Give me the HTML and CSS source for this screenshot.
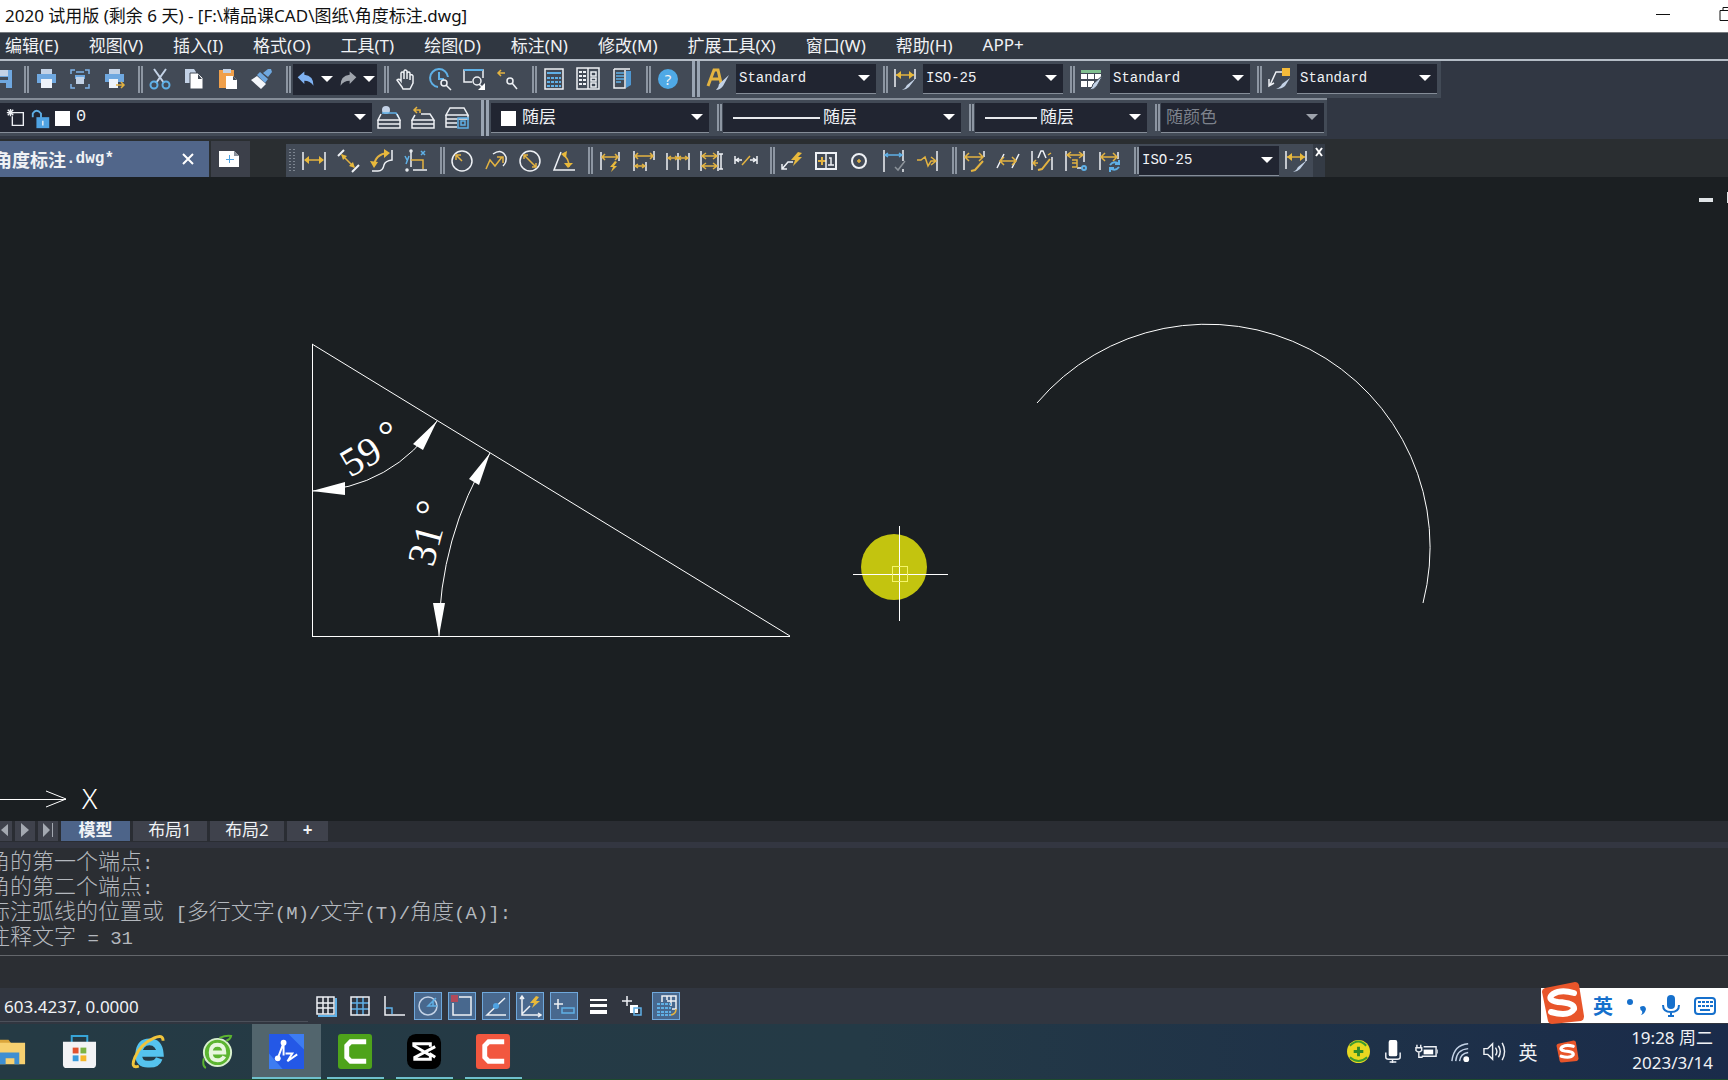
FILE: index.html
```html
<!DOCTYPE html>
<html lang="zh-CN">
<head>
    <meta charset="UTF-8">
    <meta name="viewport" content="width=device-width, initial-scale=1.0">
    <title>角度标注.dwg</title>
    <link rel="stylesheet" href="styles.css">
</head>
<body>
    <svg class="defs" width="0" height="0">
        <symbol id="dim-style" viewBox="0 0 24 24">
            <path class="w" d="M2 2v18M22 2v10"/>
            <path class="y" d="M3 8h18"/>
            <path class="yf" d="M3 8l5-4v8zM21 8l-5-4v8z"/>
            <path class="pf" d="M23 11l-7 9q-3 3-7 3 4-2 5-5z"/>
        </symbol>
        <symbol id="sogou" viewBox="0 0 44 44">
            <path fill="#e8552a" d="M4 7L34 1q3 0 4 3l5 31q0 4-3 5L11 43q-3 0-4-3L1 11q0-3 3-4z"/>
            <path fill="none" stroke="#fff" stroke-width="6" stroke-linecap="round" d="M33 12Q20 8 12 13Q5 19 17 21Q34 22 33 28Q28 36 10 31"/>
        </symbol>
    </svg>

    <header class="titlebar">
        <h1>2020 试用版 (剩余 6 天) - [F:\精品课CAD\图纸\角度标注.dwg]</h1>
        <div class="window-buttons">
            <button aria-label="最小化"><svg width="16" height="16"><path d="M1 8.500h14"/></svg></button>
            <button aria-label="还原"><svg width="16" height="16"><path d="M1 4.500h10v10h-10zM4 4.500v-3h11v10h-4"/></svg></button>
        </div>
    </header>

    <nav class="menubar">
        <button>编辑(E)</button>
        <button>视图(V)</button>
        <button>插入(I)</button>
        <button>格式(O)</button>
        <button>工具(T)</button>
        <button>绘图(D)</button>
        <button>标注(N)</button>
        <button>修改(M)</button>
        <button>扩展工具(X)</button>
        <button>窗口(W)</button>
        <button>帮助(H)</button>
        <button>APP+</button>
    </nav>

    <div class="toolbars">
        <!-- standard + styles -->
        <div class="toolbar standard">
            <button class="tool" aria-label="保存"><svg viewBox="0 0 24 24"><path class="lf" d="M2 3h23v18H2z"/><path class="pf" d="M10 3h10v6H10z"/><path fill="#424a56" d="M10 10h10v3H10zM12 16h6v5h-6z"/></svg></button>
            <i class="sep"></i>
            <button class="tool" aria-label="打印"><svg viewBox="0 0 24 24"><path class="pf" d="M7 2h11v5H7z"/><path class="lf" d="M3 7h19v9H3z"/><path fill="#eef3fa" d="M7 12h11v9H7z"/></svg></button>
            <button class="tool" aria-label="打印预览"><svg viewBox="0 0 24 24"><path class="l" d="M3 7V3h4M17 3h4v4M21 17v4h-4M7 21H3v-4M8 5h8"/><path class="lf" d="M7 8h10v4H7z"/><path class="pf" d="M8 10h8v7H8z"/></svg></button>
            <button class="tool" aria-label="发布"><svg viewBox="0 0 24 24"><path class="pf" d="M7 2h11v5H7z"/><path class="lf" d="M3 7h19v8H3z"/><path fill="#eef3fa" d="M7 12h9v9H7z"/><path class="y" d="M14 18h8M19 15l3 3-3 3"/></svg></button>
            <i class="sep"></i>
            <button class="tool" aria-label="剪切"><svg viewBox="0 0 24 24"><path class="p2" d="M6 2l10 14M18 2L8 16"/><circle class="b2" cx="6" cy="18" r="3.500"/><circle class="b2" cx="18" cy="18" r="3.500"/></svg></button>
            <button class="tool" aria-label="复制"><svg viewBox="0 0 24 24"><path class="pf" d="M3 2h9l2 3v11H3z"/><path class="wf" stroke="#424a56" d="M8 6h8l5 5v11H8z"/><path fill="#424a56" d="M16 7v5h4z"/></svg></button>
            <button class="tool" aria-label="粘贴"><svg viewBox="0 0 24 24"><path fill="#f0a04b" d="M3 3h15v18H3z"/><path class="pf" d="M7 2h8v4H7z"/><path class="wf" d="M10 9h7l4 4v9H10z"/><path fill="#424a56" d="M17 9v4h4z"/></svg></button>
            <button class="tool" aria-label="特性匹配"><svg viewBox="0 0 24 24"><path class="lf" d="M21 2l1 3-4 5-5-4 5-4zM10 5l8 7-3 4-8-8z"/><path fill="#f4f7fb" d="M1 13l6-4 9 8-5 5z"/></svg></button>
            <i class="sep"></i>
            <div class="history">
                <button aria-label="放弃"><svg viewBox="0 0 24 24"><path fill="#7fb2f2" d="M2 10l8-7v4q11 1 11 13-4-6-11-6v4z"/></svg></button>
                <i class="arrow"></i>
                <button aria-label="重做"><svg viewBox="0 0 24 24"><path fill="#a0a5ad" d="M22 10l-8-7v4Q3 8 3 20q4-6 11-6v4z"/></svg></button>
                <i class="arrow"></i>
            </div>
            <i class="sep"></i>
            <button class="tool" aria-label="平移"><svg viewBox="0 0 24 24"><path class="w" d="M8 20L3 13q2-2 4 1V6q1-2 3 0v-2q1-2 3 0v2q2-2 3 0v2q2-1 3 1v7l-3 6H9zM10 6v6M13 5v7M16 7v6"/></svg></button>
            <button class="tool" aria-label="实时缩放"><svg viewBox="0 0 24 24"><path class="b2" d="M10 20A9 9 0 1 1 20 10M11 5v7h5"/><circle class="w" cx="16" cy="16" r="3"/><path class="w" d="M18 18l5 5"/></svg></button>
            <button class="tool" aria-label="窗口缩放"><svg viewBox="0 0 24 24"><path class="w" d="M10 15H2V3h19v8"/><path class="b2" d="M2 3h19"/><circle class="w" cx="15" cy="14" r="4"/><path class="w" d="M17 17l3 3"/><path class="wf" d="M23 16v7h-7z"/></svg></button>
            <button class="tool" aria-label="缩放上一个"><svg viewBox="0 0 24 24"><path class="y" d="M2 6h7M5 3L2 6l3 3"/><circle class="w" cx="14" cy="14" r="3"/><path class="w" d="M16 16l5 6"/></svg></button>
            <i class="sep"></i>
            <button class="tool" aria-label="计算器"><svg viewBox="0 0 24 24"><path class="w" d="M3 2h18v20H3z"/><path class="b2" d="M5 6h14"/><path class="bd" d="M5 11h14M5 15h14M5 19h14"/></svg></button>
            <button class="tool" aria-label="工具选项板"><svg viewBox="0 0 24 24"><path class="w" d="M1 1h22v21H1zM12 1v21M15 5h5v4h-5zM15 11h5v3h-5zM15 16h5v4h-5z"/><path class="wd" d="M3 5h8M3 9h8M3 13h8M3 17h8"/></svg></button>
            <button class="tool" aria-label="特性"><svg viewBox="0 0 24 24"><path fill="#4f97d0" d="M16 4h5v14l-5 3z"/><path class="w" d="M4 2h16M4 2v19h11V3"/><path class="b" d="M6 6h8M6 9h8M6 12h8M6 15h5"/></svg></button>
            <i class="sep"></i>
            <button class="tool help" aria-label="帮助">?</button>
            <i class="sep big"></i>

            <button class="tool" aria-label="文字样式"><svg viewBox="0 0 24 24"><path class="y3" d="M2 19L8 3h4l3 13M5 12h9"/><path class="pf" d="M23 8l-6 11q-3 4-7 4 3-3 3-6z"/></svg></button>
            <div class="combo style"><select aria-label="文字样式"><option>Standard</option></select></div>
            <i class="sep"></i>
            <button class="tool" aria-label="标注样式"><svg><use href="#dim-style"/></svg></button>
            <div class="combo style"><select aria-label="标注样式"><option>ISO-25</option></select></div>
            <i class="sep"></i>
            <button class="tool" aria-label="表格样式"><svg viewBox="0 0 24 24"><path fill="#7fbf8f" d="M1 3h20v3H1z"/><path class="wf" d="M1 7h6v5H1zM8 7h6v5H8zM15 7h6v5h-6zM1 14h6v6H1zM8 14h6v6H8z"/><path class="pf" stroke="#424a56" d="M23 8l-6 11q-3 4-8 4 4-3 4-6z"/></svg></button>
            <div class="combo style"><select aria-label="表格样式"><option>Standard</option></select></div>
            <i class="sep"></i>
            <button class="tool" aria-label="多重引线样式"><svg viewBox="0 0 24 24"><path class="w" d="M15 5H9L3 18M2 12v7l5-3"/><path fill="#f5bb3a" d="M15 1h8v8h-8z"/><path class="pf" d="M23 11l-5 8q-3 3-9 3 5-2 6-5z"/></svg></button>
            <div class="combo style"><select aria-label="多重引线样式"><option>Standard</option></select></div>
        </div>

        <!-- layers + properties -->
        <div class="toolbar layers">
            <div class="combo layer">
                <span class="layer-icons">
                    <svg viewBox="0 0 24 24"><path class="w" d="M8 5h12v14H8V9"/><path class="w" d="M2 5h8M6 1v8M3 2l6 6M9 2L3 8"/></svg>
                    <svg viewBox="0 0 24 24"><path class="b2" d="M3 10V6q4-6 9 0v5"/><path fill="#4fa3e3" d="M7 10h14v12H7z"/><path class="w" d="M14 14v5"/></svg>
                    <i class="swatch"></i>
                </span>
                <select aria-label="图层"><option>0</option></select>
            </div>
            <button class="tool" aria-label="图层置为当前"><svg viewBox="0 0 24 24"><circle class="pf" cx="9" cy="4" r="4"/><path class="b" d="M5 7h14l3 5"/><path class="w" d="M4 8l-3 6h22l-3-6M1 14v4h22v-4M1 18v4h22v-4"/></svg></button>
            <button class="tool" aria-label="上一个图层"><svg viewBox="0 0 24 24"><path class="y" d="M3 4h6v3M6 1L3 4l3 3"/><path class="w" d="M10 8h9l4 6H1l3-5M1 14v4h22v-4M1 18v4h22v-4"/></svg></button>
            <button class="tool" aria-label="图层特性"><svg viewBox="0 0 24 24"><path class="w" d="M5 2h14l4 7H1zM1 9v4h22V9M1 13v8h11M1 17h11"/><path class="b" d="M13 12h10v10H13zM16 15h4v4h-4z"/></svg></button>
            <i class="sep big"></i>
            <div class="combo color"><i class="swatch"></i><select aria-label="颜色"><option>随层</option></select></div>
            <i class="sep"></i>
            <div class="combo linetype"><i class="line"></i><select aria-label="线型"><option>随层</option></select></div>
            <i class="sep"></i>
            <div class="combo lineweight"><i class="line"></i><select aria-label="线宽"><option>随层</option></select></div>
            <i class="sep"></i>
            <div class="combo plotstyle"><select aria-label="打印样式" disabled><option>随颜色</option></select></div>
        </div>
    </div>

    <div class="doc-row">
        <div class="doc-tab"><span class="cn">角度标注</span>.dwg*
            <button aria-label="关闭"><svg width="12" height="12"><path d="M1 1l10 10M11 1L1 11"/></svg></button>
        </div>
        <button class="new-tab" aria-label="新建"><svg width="22" height="18"><path fill="#fff" d="M1 1h15l5 5v11H1z"/><path fill="#8b919b" d="M16 1v5h5z"/><path stroke="#4fa3e3" d="M11.500 5v8M8 9.500h8"/></svg></button>

        <div class="toolbar dimension">
            <i class="grip"></i>
            <button class="tool" aria-label="线性"><svg viewBox="0 0 24 24"><path class="w" d="M1 3v18M23 3v18"/><path class="y" d="M3 11h18"/><path class="yf" d="M2 11l5-4v8zM22 11l-5-4v8z"/></svg></button>
            <button class="tool" aria-label="对齐"><svg viewBox="0 0 24 24"><path class="w2" d="M2 7l6-6M16 23l7-7"/><path class="y" d="M6 6l12 12"/><path class="yf" d="M5 5l6 2-4 4zM19 19l-6-2 4-4z"/></svg></button>
            <button class="tool" aria-label="弧长"><svg viewBox="0 0 24 24"><path class="w" d="M22 1v10q-7 1-8 5-1 6-6 6H2"/><path class="y2" d="M4 17Q5 5 18 4"/><path class="yf" d="M14 0l6 4-6 5zM0 12l8 1-4 6z"/></svg></button>
            <button class="tool" aria-label="坐标"><svg viewBox="0 0 24 24"><path class="w" d="M7 3v15M9 21h14"/><path class="y" d="M7 11h12v9"/><circle class="w" cx="7" cy="2" r="1"/><circle class="w" cx="3" cy="21" r="1"/><path class="b" d="M1 7l2 4M5 7l-3 8M17 2l4 4M21 2l-4 4"/></svg></button>
            <i class="sep"></i>
            <button class="tool" aria-label="半径"><svg viewBox="0 0 24 24"><circle class="w" cx="12" cy="12" r="10"/><path class="y" d="M12 12L6 6M6 11V6h5"/></svg></button>
            <button class="tool" aria-label="折弯"><svg viewBox="0 0 24 24"><path class="w" d="M9 5q9-6 13 3 1 5-3 9"/><path class="y" d="M2 20l4-9 5 6 7-9M13 8h6v6"/></svg></button>
            <button class="tool" aria-label="直径"><svg viewBox="0 0 24 24"><circle class="w" cx="12" cy="12" r="10"/><path class="y" d="M6 6l12 12M6 10V6h4M18 14v4h-4"/></svg></button>
            <button class="tool" aria-label="角度"><svg viewBox="0 0 24 24"><path class="w" d="M9 3L2 21h21"/><path class="y" d="M11 6q6 3 6 12"/><path class="yf" d="M9 5l6-3-1 7zM12 14h9l-5 5z"/></svg></button>
            <i class="sep"></i>
            <button class="tool" aria-label="快速标注"><svg viewBox="0 0 24 24"><path class="w" d="M3 3v18M21 3v9"/><path class="y" d="M4 8h16M7 5L4 8l3 3M17 5l3 3-3 3"/><path class="yf" d="M17 12l-5 6h3l-2 5 6-6h-3l3-4z"/></svg></button>
            <button class="tool" aria-label="基线"><svg viewBox="0 0 24 24"><path class="w" d="M2 2v20M22 2v9M14 13v9"/><path class="y" d="M3 7h18M6 4L3 7l3 3M18 4l3 3-3 3M3 17h10M6 15l-3 2 3 2M10 15l3 2-3 2"/></svg></button>
            <button class="tool" aria-label="连续"><svg viewBox="0 0 24 24"><path class="w" d="M1 4v17M12 4v17M23 4v17"/><path class="y" d="M2 9h20M5 7L2 9l3 2M9 7l3 2-3 2M15 7l-3 2 3 2M19 7l3 2-3 2"/></svg></button>
            <button class="tool" aria-label="等距标注"><svg viewBox="0 0 24 24"><path class="w" d="M1 2v20M18 2v20M19 5h4M19 20h4M21 5v15"/><path class="y" d="M2 7h15M2 17h15M6 4L2 7l4 3M13 4l4 3-4 3M6 14l-4 3 4 3M13 14l4 3-4 3"/></svg></button>
            <button class="tool" aria-label="折断标注"><svg viewBox="0 0 24 24"><path class="w" d="M1 7v8M23 7v8M2 11h6M16 11h6M5 9l-3 2 3 2M19 9l3 2-3 2"/><path class="y" d="M8 16l8-9"/></svg></button>
            <i class="sep"></i>
            <button class="tool" aria-label="快速引线"><svg viewBox="0 0 24 24"><path class="w" d="M2 20l6-7h5M2 15v5h5"/><path class="yf" d="M18 3l-7 8h4l-2 6 9-9h-4l4-4z"/></svg></button>
            <button class="tool" aria-label="公差"><svg viewBox="0 0 24 24"><path class="w2" d="M2 4h20v16H2z"/><path class="y2" d="M4 12h8M8 8v8"/><path class="w" d="M12 5v14M15 9h2v7M14 16h6"/></svg></button>
            <button class="tool" aria-label="圆心标记"><svg viewBox="0 0 24 24"><circle class="w2" cx="11" cy="12" r="7"/><path class="y" d="M9 12h4M11 10v4"/></svg></button>
            <button class="tool" aria-label="检验"><svg viewBox="0 0 24 24"><path class="w" d="M2 1v22M21 1v11M21 20v3"/><path class="b" d="M3 6h17M6 4L3 6l3 2M17 4l3 2-3 2"/><path class="g" d="M13 18l3 3 7-9"/></svg></button>
            <button class="tool" aria-label="折弯线性"><svg viewBox="0 0 24 24"><path class="w" d="M21 2v20"/><path class="y" d="M1 11h4l4-3 3 9 3-5h4M15 8l5 4-5 4"/></svg></button>
            <i class="sep"></i>
            <button class="tool" aria-label="编辑标注"><svg viewBox="0 0 24 24"><path class="w" d="M2 2v19M22 2v6"/><path class="y" d="M3 8h17M7 4L3 8l4 4M17 4l4 4-4 4"/><path class="y2" d="M21 12l-8 9-4 1"/></svg></button>
            <button class="tool" aria-label="倾斜"><svg viewBox="0 0 24 24"><path class="w" d="M1 19L8 5M16 19l7-14"/><path class="y" d="M5 12h14M8 8l-4 4 4 4M16 8l4 4-4 4"/></svg></button>
            <button class="tool" aria-label="文字角度"><svg viewBox="0 0 24 24"><path class="w" d="M2 2v19M22 8v13M8 9l3-7h2l3 7"/><path class="y" d="M3 14h5M6 11l-3 3 3 3M18 6l3-2"/><path class="y2" d="M20 10l-8 10-4 1"/></svg></button>
            <button class="tool" aria-label="替代"><svg viewBox="0 0 24 24"><path class="w" d="M2 2v20M20 2v11M13 19h5"/><path class="y" d="M3 6h16M7 3L3 6l4 3M15 3l4 3-4 3M8 11h5v7H8M8 14h5"/><circle class="b2" cx="20" cy="19" r="2"/></svg></button>
            <button class="tool" aria-label="标注更新"><svg viewBox="0 0 24 24"><path class="w" d="M2 3v18M20 3v7"/><path class="y" d="M3 8h16M7 4L3 8l4 4M15 4l4 4-4 4"/><path class="b2" d="M12 16q4-5 9-1M21 11v4h-4M21 18q-4 5-9 1M12 23v-4h4"/></svg></button>
            <i class="sep"></i>
            <div class="combo current"><select aria-label="当前标注样式"><option>ISO-25</option></select></div>
            <button class="tool" aria-label="标注样式管理"><svg><use href="#dim-style"/></svg></button>
            <button class="close-bar" aria-label="关闭工具栏"><svg width="10" height="10"><path d="M2 1l6 8M8 1L2 9"/></svg></button>
        </div>
    </div>

    <main class="canvas">
        <svg class="drawing">
            <!-- triangle -->
            <path class="edge" shape-rendering="crispEdges" d="M312 167V459H790"/>
            <path class="edge" d="M312 167L790 459"/>
            <!-- 59 degree dimension -->
            <path class="edge" d="M312 314A147 147 0 0 0 437 244"/>
            <path class="head" d="M312 314L345 305V318zM437 244L423 273L413 267z"/>
            <text x="350" y="301" transform="rotate(-30 350 301)">59<tspan dx="8" dy="-5">°</tspan></text>
            <!-- 31 degree dimension -->
            <path class="edge" d="M439 459A351 351 0 0 1 490 276"/>
            <path class="head" d="M439 459L433 426H445zM490 276L479 308L469 302z"/>
            <text x="433" y="391" transform="rotate(-75 433 391)">31<tspan dx="8" dy="-5">°</tspan></text>
            <!-- arc -->
            <path class="edge" d="M1037 226A223 223 0 0 1 1423 426"/>
            <!-- cursor -->
            <circle class="spot" cx="894" cy="390" r="33"/>
            <path class="cross" d="M853 397h95M899 349v95"/>
            <path class="pick" d="M892 389h15v15h-15z"/>
            <!-- ucs icon -->
            <path class="cross" d="M0 622h66"/>
            <path class="edge" d="M46 614l20 8-20 8"/>
            <text class="axis" x="82" y="632">X</text>
        </svg>
        <div class="mdi-buttons">
            <button aria-label="最小化窗口"><svg width="14" height="16"><path d="M0 9h14v4H0z"/></svg></button>
            <button aria-label="还原窗口"><svg width="14" height="16"><path d="M0 3h12v11H0z"/></svg></button>
        </div>
    </main>

    <div class="layout-tabs">
        <button class="nav" aria-label="上一个"><svg width="10" height="14"><path d="M9 0v14L1 7z"/></svg></button>
        <button class="nav" aria-label="下一个"><svg width="10" height="14"><path d="M1 0v14l8-7z"/></svg></button>
        <button class="nav" aria-label="最后一个"><svg width="12" height="14"><path d="M1 0v14l7-7zM10 0h1v14h-1z"/></svg></button>
        <button class="tab active">模型</button>
        <button class="tab">布局1</button>
        <button class="tab">布局2</button>
        <button class="tab add">+</button>
    </div>

    <section class="command">
        <div class="log">
            <p><span class="cn">角的第一个端点</span>:</p>
            <p><span class="cn">角的第二个端点</span>:</p>
            <p><span class="cn">标注弧线的位置或</span> [<span class="cn">多行文字</span>(M)/<span class="cn">文字</span>(T)/<span class="cn">角度</span>(A)]:</p>
            <p><span class="cn">注释文字</span> = 31</p>
        </div>
        <input type="text" aria-label="命令行">
    </section>

    <footer class="status">
        <div class="coords">603.4237, 0.0000</div>
        <div class="toggles">
            <button aria-label="捕捉"><svg viewBox="0 0 24 24"><path class="b2" d="M4 22h18V4"/><path class="w" d="M3 3h17v17H3zM3 9h17M3 14h17M9 3v17M14 3v17"/></svg></button>
            <button aria-label="栅格"><svg viewBox="0 0 24 24"><path class="b" d="M3 9h18M3 15h18M9 3v18M15 3v18"/><path class="w" d="M3 3h18v18H3z"/></svg></button>
            <button aria-label="正交"><svg viewBox="0 0 24 24"><path class="w" d="M3 2v19h20"/><path class="b" d="M4 14h6v6"/></svg></button>
            <button class="on" aria-label="极轴追踪"><svg viewBox="0 0 24 24"><circle class="p" cx="12" cy="12" r="9"/><path class="b" d="M20 4l-8 8h9M17 7v5"/></svg></button>
            <button class="on" aria-label="对象捕捉"><svg viewBox="0 0 24 24"><path class="w" d="M9 3h12v18H3V9"/><path fill="#b04a5a" d="M1 1h7v7H1z"/></svg></button>
            <button class="on" aria-label="对象追踪"><svg viewBox="0 0 24 24"><path class="w" d="M21 4L3 21h19"/><circle fill="#4fa3e3" cx="12" cy="12" r="3"/></svg></button>
            <button class="on" aria-label="动态UCS"><svg viewBox="0 0 24 24"><path class="w" d="M4 2v19h19M2 5l2-3 2 3M20 19l3 2-3 2M4 20l8-8"/><path class="yf" d="M18 2l-6 7h4l-2 5 8-7h-4l3-4z"/></svg></button>
            <button class="on" aria-label="动态输入"><svg viewBox="0 0 24 24"><path class="w" d="M2 10h9M6 5v10"/><path class="b" d="M10 14h12v5H10z"/></svg></button>
            <button aria-label="线宽"><svg viewBox="0 0 24 24"><path class="wf" d="M4 5h17v2H4zM4 10h17v3H4zM4 16h17v4H4z"/></svg></button>
            <button aria-label="循环选择"><svg viewBox="0 0 24 24"><path class="w" d="M2 7h10M7 2v10"/><path class="wf" d="M10 11h8v8h-8z"/><path class="b" d="M14 14h7v7h-7z"/></svg></button>
            <button class="on" aria-label="注释监视"><svg viewBox="0 0 24 24"><path class="w" d="M8 8V2h14v13h-4M13 2v4M17 2v10M13 7h9"/><path class="bd" d="M3 10h14M3 14h14M3 18h14M3 21h14"/><path class="y" d="M22 15q0 5-5 6"/></svg></button>
        </div>
    </footer>

    <div class="ime">
        <svg class="ime-logo"><use href="#sogou"/></svg>
        <button>英</button>
        <button aria-label="标点"><svg viewBox="0 0 24 24"><circle cx="5" cy="8" r="3"/><path d="M15 13q5-3 6 2-1 5-5 6 2-2 1-4-2-1-2-4z"/></svg></button>
        <button aria-label="语音"><svg viewBox="0 0 24 24"><rect x="8" y="1" width="8" height="14" rx="4"/><path fill="none" stroke="#1670cc" stroke-width="2" d="M4 11q0 7 8 7t8-7M12 18v5M9 22h6"/></svg></button>
        <button aria-label="键盘"><svg viewBox="0 0 24 24"><rect x="2" y="4" width="20" height="16" rx="3" fill="none" stroke="#1670cc" stroke-width="2"/><path fill="none" stroke="#1670cc" stroke-width="2" stroke-dasharray="3 1" d="M5 8h15M5 12h15"/><path fill="none" stroke="#1670cc" stroke-width="2" d="M7 16h10"/></svg></button>
    </div>

    <div class="taskbar">
        <div class="apps">
            <button aria-label="文件资源管理器"><svg viewBox="0 0 36 36"><path fill="#dba63c" d="M0 6h16l3 4v20H0z"/><path fill="#f7d070" d="M0 9h33v22H0z"/><path fill="#3f8fd2" d="M7 19h20v12h-5v-6H13v6H7z"/></svg></button>
            <button aria-label="应用商店"><svg viewBox="0 0 36 36"><path fill="none" stroke="#37a5d8" stroke-width="2" d="M10 10V2h16v8"/><path fill="#f3f3f5" d="M1 8h34v23q0 4-4 4H5q-4 0-4-4z"/><path fill="#e2522f" d="M11 14h6v6h-6z"/><path fill="#7cb342" d="M19 14h6v6h-6z"/><path fill="#3a9bdc" d="M11 22h6v6h-6z"/><path fill="#f5b729" d="M19 22h6v6h-6z"/></svg></button>
            <button aria-label="浏览器"><svg viewBox="0 0 36 36"><path fill="none" stroke="#55c3ee" stroke-width="7" d="M9 20h21Q29 8 19 8T8 20t11 11q8 0 10-6"/><path fill="none" stroke="#f0c43c" stroke-width="3" d="M8 33Q-1 36 4 24 10 10 24 4q9-4 9 3"/></svg></button>
            <button aria-label="安全浏览器"><svg viewBox="0 0 36 36"><circle cx="18" cy="19" r="14" fill="#5cb531" stroke="#d9f0cf" stroke-width="2"/><path fill="none" stroke="#e8f7df" stroke-width="4" d="M11 19h14q0-8-7-8t-7 8 7 8q5 0 7-4"/><path fill="none" stroke="#5cb531" stroke-width="2" d="M20 4Q27 1 32 2q-1 4-5 5M4 25Q2 33 6 35"/></svg></button>
            <button class="running current" aria-label="CAD"><svg viewBox="0 0 36 36"><path fill="#2458e6" d="M0 0h36v36H0z"/><path fill="#3d7cf2" d="M20 0h16v16zM0 20l14 16H0z"/><g stroke="#fff" fill="none" stroke-width="2"><path d="M15 9L9 25M15 9v13"/><path d="M17 20h7l-5 8 10-7"/></g><circle fill="#fff" cx="15" cy="9" r="3"/><circle fill="#fff" cx="9" cy="25" r="3"/></svg></button>
            <button class="running" aria-label="录屏编辑"><svg viewBox="0 0 36 36"><rect width="35" height="36" rx="3" fill="#4ea31b"/><path fill="none" stroke="#fff" stroke-width="5" d="M29 8H13L9 12v12l4 4h16"/></svg></button>
            <button class="running" aria-label="剪映"><svg viewBox="0 0 36 36"><rect width="35" height="36" rx="9" fill="#000"/><path fill="none" stroke="#fff" stroke-width="3" d="M29 13L8 24v2h16v-4L7 12v-2h17v3M23 20l6 4"/></svg></button>
            <button class="running" aria-label="录屏"><svg viewBox="0 0 36 36"><rect width="35" height="36" rx="3" fill="#f2573f"/><path fill="none" stroke="#fff" stroke-width="5" d="M29 8H13L9 12v12l4 4h16"/></svg></button>
        </div>
        <div class="tray">
            <button aria-label="安全卫士"><svg viewBox="0 0 24 24"><circle cx="12" cy="12" r="12" fill="#e8d820"/><path fill="none" stroke="#3d9b2e" stroke-width="2" d="M3 6Q12-3 20 6M3 18q9 8 18 0"/><path stroke="#2e8a2a" stroke-width="3" d="M12 7v10M7 12h10"/></svg></button>
            <button aria-label="麦克风"><svg viewBox="0 0 24 24"><rect class="wf" x="8" y="0" width="9" height="17" rx="2"/><path class="w" d="M5 13v5q0 2 3 2h9q3 0 3-2v-5M12 20v4M9 23h7"/></svg></button>
            <button aria-label="电源"><svg viewBox="0 0 24 24"><path class="w" d="M9 7h13v10H7M24 10v4M2 5v3M6 5v3M1 8h6v3q-3 3-6 0zM4 13v5h4"/><path class="wf" d="M9 10h10v5H9z"/></svg></button>
            <button aria-label="网络"><svg viewBox="0 0 24 24"><path class="p" d="M3 22Q5 5 20 4M7 22Q8 10 20 9M11 22q1-8 9-9"/><circle class="wf" cx="18" cy="20" r="3"/></svg></button>
            <button aria-label="音量"><svg viewBox="0 0 24 24"><path class="w" d="M1 9h4l5-5v16l-5-5H1zM13 8q3 4 0 8M16 6q4 6 0 12M20 3q5 9 0 18"/></svg></button>
            <button class="lang">英</button>
            <button aria-label="输入法"><svg viewBox="0 0 44 44"><use href="#sogou"/></svg></button>
        </div>
        <div class="clock">
            <div>19:28 周二</div>
            <div>2023/3/14</div>
        </div>
    </div>
</body>
</html>
```
FILE: styles.css
```css
* {
    box-sizing: border-box;
}

body {
    margin: 0;
    height: 100vh;
    display: flex;
    flex-direction: column;
    position: relative;
    overflow: hidden;
    background: #1b1f22;
    color: #f0f2f5;
    font-family: "Noto Sans", "Noto Sans CJK SC", sans-serif;
    font-size: 17px;
}

button, select, input {
    font: inherit;
    color: inherit;
    background: none;
    border: none;
    border-radius: 0;
    padding: 0;
    margin: 0;
    outline: none;
}

button {
    display: flex;
    align-items: center;
    justify-content: center;
    white-space: nowrap;
}

.defs {
    position: absolute;
}

/* icon strokes and fills */
.w, .w2, .wd, .y, .y2, .y3, .b, .b2, .bd, .l, .p, .p2, .g {
    fill: none;
    stroke-width: 1.5;
}

.w, .w2, .wd { stroke: #eef1f5; }
.y, .y2, .y3 { stroke: #e3b341; }
.b, .b2, .bd { stroke: #5fb0e6; }
.l { stroke: #7fb2e8; }
.p, .p2 { stroke: #c3d2e6; }
.g { stroke: #8b9299; }
.w2, .y2, .b2, .p2 { stroke-width: 2; }
.y3 { stroke-width: 3; }
.wd, .bd { stroke-width: 2; stroke-dasharray: 3 1; }
.wf { fill: #fff; }
.yf { fill: #e8b93c; }
.lf { fill: #6fa8e0; }
.pf { fill: #c3d2e6; }

/* title and menu */
.titlebar {
    height: 33px;
    flex: none;
    display: flex;
    justify-content: space-between;
    background: #fff;
    color: #111;
    border-bottom: 1px solid #777b80;
}

.titlebar h1 {
    margin: 0;
    padding-left: 5px;
    font-size: 17px;
    font-weight: normal;
    line-height: 32px;
}

.window-buttons {
    display: flex;
    gap: 48px;
    margin-right: -7px;
    padding-bottom: 4px;
}

.window-buttons path {
    fill: none;
    stroke: #111;
}

.menubar {
    height: 26px;
    flex: none;
    display: flex;
    gap: 30px;
    padding: 0 0 3px 5px;
    background: #303741;
}

/* toolbars */
.toolbars {
    flex: none;
    height: 80px;
    background: #313743;
    border-top: 2px solid #b4bcc6;
}

.toolbar {
    display: flex;
    align-items: center;
    width: max-content;
    background: #424a56;
}

.standard {
    height: 37px;
    margin-left: -17px;
    padding: 0 4px 1px 0;
}

.layers {
    height: 38px;
    padding: 0 2px 1px 0;
    border-top: 2px solid #858d98;
}

.tool {
    width: 34px;
    height: 30px;
    flex: none;
}

.tool svg {
    width: 24px;
    height: 24px;
}

.sep {
    width: 12px;
    height: 27px;
    flex: none;
    background: linear-gradient(90deg, #8d96a2 2px, transparent 2px, transparent 3px, #8d96a2 3px) 7px 0 / 5px 100% no-repeat;
}

.sep.big {
    width: 16px;
    height: 36px;
    background: linear-gradient(90deg, #9aa5b3 3px, transparent 3px, transparent 5px, #9aa5b3 5px) 7px 0 / 8px 100% no-repeat;
}

.help {
    width: 20px;
    height: 20px;
    margin: 0 7px;
    border-radius: 50%;
    background: #4fa9e6;
    font-size: 15px;
}

.history {
    display: flex;
    align-items: center;
    justify-content: space-around;
    width: 84px;
    height: 31px;
    margin-left: 2px;
    background: #212531;
}

.history svg {
    width: 20px;
    height: 20px;
}

.arrow, .combo::after {
    border: 6px solid transparent;
    border-top: 6px solid #fff;
    border-bottom: 0;
}

.combo {
    position: relative;
    flex: none;
    height: 30px;
    background: #212531;
    border-bottom: 1px solid #858d98;
}

.combo::after {
    content: "";
    position: absolute;
    right: 6px;
    top: 11px;
}

.combo select {
    appearance: none;
    width: 100%;
    height: 100%;
    padding: 0 0 2px;
    opacity: 1;
}

.style, .current {
    width: 140px;
    margin-left: 1px;
}

.dimension .current {
    margin-left: 0;
}

.style select, .current select {
    padding: 0 0 6px 3px;
    font-family: "Liberation Mono", monospace;
    font-size: 14px;
}

.layers .combo {
    margin: 0 1px;
}

.layers .layer {
    width: 372px;
    margin: 0;
}

.layer select {
    padding-left: 76px;
    font-family: "Liberation Mono", monospace;
}

.layer-icons {
    position: absolute;
    left: 5px;
    top: 5px;
    display: flex;
    align-items: center;
    gap: 3px;
}

.layer-icons svg {
    width: 22px;
    height: 22px;
}

.swatch {
    width: 15px;
    height: 15px;
    background: #fff;
}

.color .swatch, .combo .line {
    position: absolute;
    left: 10px;
    top: 8px;
}

.combo .line {
    top: 14px;
    height: 2px;
    background: #e8eaee;
}

.color { width: 218px; }
.color select { padding-left: 31px; }
.linetype { width: 238px; }
.linetype .line { width: 87px; }
.linetype select { padding-left: 100px; }
.lineweight { width: 172px; }
.lineweight .line { width: 52px; }
.lineweight select { padding-left: 65px; }
.plotstyle { width: 163px; color: #7d828c; }
.plotstyle select { padding-left: 5px; }
.plotstyle::after { border-top-color: #9ea3ac; }

/* document tabs and dimension toolbar */
.doc-row {
    flex: none;
    display: flex;
    align-items: flex-end;
    height: 38px;
    background: #2a2e31;
}

.doc-tab {
    display: flex;
    align-items: center;
    width: 215px;
    height: 36px;
    margin-left: -6px;
    padding-right: 15px;
    background: #51668a;
    font-family: "Liberation Mono", monospace;
    font-size: 16px;
    font-weight: bold;
}

.doc-tab .cn {
    font-size: 18px;
}

.cn {
    font-family: "Noto Sans CJK SC", sans-serif;
}

.doc-tab button {
    margin-left: auto;
}

.doc-tab path, .close-bar path {
    stroke: #fff;
    stroke-width: 2;
}

.new-tab {
    width: 39px;
    height: 36px;
    margin: 0 36px 0 2px;
    padding-right: 3px;
    background: #3c404a;
}

.dimension {
    height: 33px;
}

.grip {
    width: 7px;
    height: 25px;
    margin: 0 2px;
    background: radial-gradient(#7d8590 1px, transparent 1px) 0 0 / 4px 3px;
}

.close-bar {
    width: 12px;
    height: 33px;
    padding-top: 3px;
    align-items: flex-start;
    background: #343b45;
}

/* drawing area */
.canvas {
    flex: 1;
    min-height: 0;
    position: relative;
    background: #1b1f22;
}

.drawing {
    display: block;
    width: 100%;
    height: 100%;
}

.drawing text {
    fill: #fff;
    font-family: "Liberation Serif", serif;
    font-size: 40px;
}

.drawing .axis {
    font-family: "Noto Sans", sans-serif;
    font-size: 28px;
    font-weight: 300;
}

.edge, .cross, .pick {
    fill: none;
    stroke: #fff;
}

.cross, .pick {
    shape-rendering: crispEdges;
}

.head {
    fill: #fff;
}

.spot {
    fill: #c3c40f;
}

.pick {
    stroke: #f4f56a;
}

.mdi-buttons {
    position: absolute;
    top: 12px;
    right: -13px;
    display: flex;
    gap: 14px;
}

.mdi-buttons path {
    fill: #dfe3e6;
}

/* layout tabs */
.layout-tabs {
    flex: none;
    display: flex;
    gap: 3px;
    height: 27px;
    padding-bottom: 7px;
    background: linear-gradient(#2a2d33 21px, #333641 21px);
}

.layout-tabs button {
    background: #3f424c;
    line-height: 20px;
    padding-bottom: 2px;
}

.layout-tabs .nav {
    width: 20px;
}

.layout-tabs .nav:first-child {
    width: 12px;
    padding-right: 4px;
}

.nav path {
    fill: #a4a9b1;
}

.layout-tabs .tab {
    width: 74px;
}

.layout-tabs .active {
    width: 69px;
    background: #4d6489;
    font-weight: bold;
}

.layout-tabs .add {
    width: 41px;
    font-weight: bold;
}

/* command line */
.command {
    flex: none;
    background: #2b2e33;
    color: #b4b8be;
    font-family: "Liberation Mono", monospace;
    font-size: 19px;
}

.log {
    margin-left: -12px;
    padding-bottom: 7px;
    border-bottom: 1px solid #63666b;
}

.log p {
    margin: 0;
    height: 25px;
    line-height: 23px;
    white-space: pre;
}

.log .cn {
    font-size: 22px;
    font-weight: 300;
}

.command input {
    display: block;
    width: 100%;
    height: 32px;
}

/* status bar */
.status {
    flex: none;
    display: flex;
    align-items: center;
    height: 36px;
    background: #313640;
}

.coords {
    width: 308px;
    height: 32px;
    margin-right: 4px;
    padding-left: 4px;
    line-height: 34px;
    border-bottom: 1px solid #4b505a;
}

.toggles {
    display: flex;
    gap: 6px;
}

.toggles button {
    width: 28px;
    height: 28px;
}

.toggles svg {
    width: 24px;
    height: 24px;
}

.toggles .on {
    background: #48688e;
    border: 1px solid #6fa8dc;
}

/* floating input method bar */
.ime {
    position: absolute;
    right: 0;
    bottom: 57px;
    display: flex;
    align-items: center;
    gap: 10px;
    height: 35px;
    padding-right: 11px;
    background: #fff;
    color: #1670cc;
    font-size: 20px;
    font-weight: bold;
}

.ime-logo {
    width: 44px;
    height: 44px;
    margin: 0 -4px 6px 0;
}

.ime button {
    width: 24px;
}

.ime button svg {
    width: 24px;
    height: 24px;
    flex: none;
    fill: #1670cc;
}

/* taskbar */
.taskbar {
    flex: none;
    display: flex;
    align-items: center;
    height: 56px;
    background: linear-gradient(90deg, #253a44, #243a46 50%, #1a2b4a);
    border-bottom: 1px solid #1d4a2c;
}

.apps {
    display: flex;
    align-self: stretch;
    margin-left: -24px;
}

.apps button {
    position: relative;
    width: 69px;
}

.apps svg {
    width: 35px;
    height: 35px;
}

.running::after {
    content: "";
    position: absolute;
    left: 6px;
    right: 6px;
    bottom: 0;
    height: 2px;
    background: #6fc0cc;
}

.running.current {
    margin: 0;
    background: #52656d;
}

.running.current::after {
    left: 0;
    right: 0;
}

.tray {
    display: flex;
    gap: 10px;
    margin-left: auto;
}

.tray button {
    width: 24px;
    height: 24px;
}

.tray svg {
    width: 23px;
    height: 23px;
}

.tray .lang {
    margin-right: 5px;
    font-size: 19px;
}

.clock {
    width: 149px;
    padding: 0 15px 3px 0;
    text-align: right;
    line-height: 25px;
}
```
